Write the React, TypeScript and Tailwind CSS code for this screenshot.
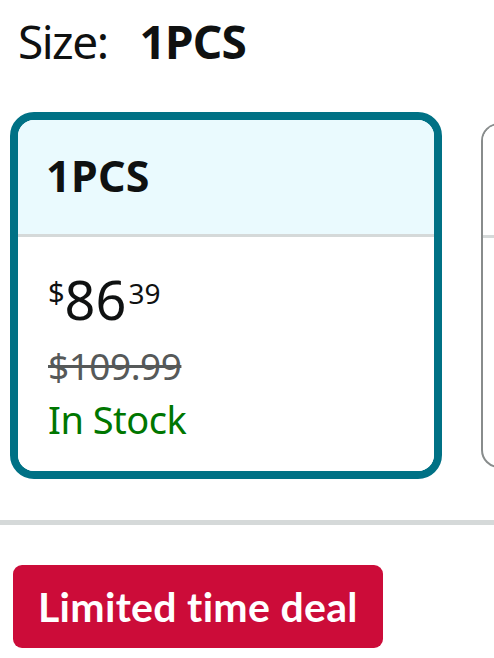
const font = "font-['Noto_Sans',sans-serif]";

const SizeCard = ({ selected }: { selected: boolean }) => (
  <div
    className={`shrink-0 flex flex-col overflow-hidden ${
      selected
        ? 'w-[432px] h-[367px] border-[8px] border-[#007185] rounded-[24px]'
        : 'w-[420px] h-[345px] border-2 border-[#888c8c] rounded-[18px]'
    }`}
  >
    <div className={`${selected ? 'h-[114px] bg-[#eafafe]' : 'h-[110px] bg-white'} pl-[28px] pt-[34px]`}>
      {selected && <p className="text-[43px] leading-none font-bold text-[#0f1111] tracking-[0.3px]">1PCS</p>}
    </div>
    <div className="h-[3px] bg-[#d5d9d9]" />
    {selected && (
      <div className="flex-1 bg-white pl-[30px] pt-[35px]">
        <div className="flex items-start text-[#0f1111] leading-none">
          <span className="text-[29px] mt-[5px]">$</span>
          <span className="text-[54px]">86</span>
          <span className="text-[28px] mt-[7px] ml-[2px]">39</span>
        </div>
        <p className="mt-[21px] text-[37px] leading-none text-[#565959] line-through tracking-[-0.5px]">$109.99</p>
        <p className="mt-[16px] text-[38px] leading-none text-[#007600] tracking-[-0.5px]">In Stock</p>
      </div>
    )}
  </div>
);

export default function App() {
  return (
    <div className={`w-[494px] h-[658px] overflow-hidden bg-white ${font}`}>
      <div className="pl-[18px] pt-[18px] text-[46px] leading-none text-[#0f1111]">
        <span className="tracking-[-1.5px]">Size:</span>
        <span className="ml-[32px] font-bold tracking-[-0.8px]">1PCS</span>
      </div>

      <div className="mt-[48px] flex items-center gap-[39px] pl-[10px]">
        <SizeCard selected />
        <SizeCard selected={false} />
      </div>

      <div className="mt-[41px] h-[5px] bg-[#d5d9d9]" />

      <div className="pl-[13px] pt-[40px]">
        <div className="inline-flex items-center h-[83px] w-[370px] rounded-[9px] bg-[#cc0c39] pl-[25px]">
          <span className="whitespace-nowrap text-[41px] leading-none font-bold text-white font-['Lato',sans-serif] tracking-[0.3px]">
            Limited time deal
          </span>
        </div>
      </div>
    </div>
  );
}
